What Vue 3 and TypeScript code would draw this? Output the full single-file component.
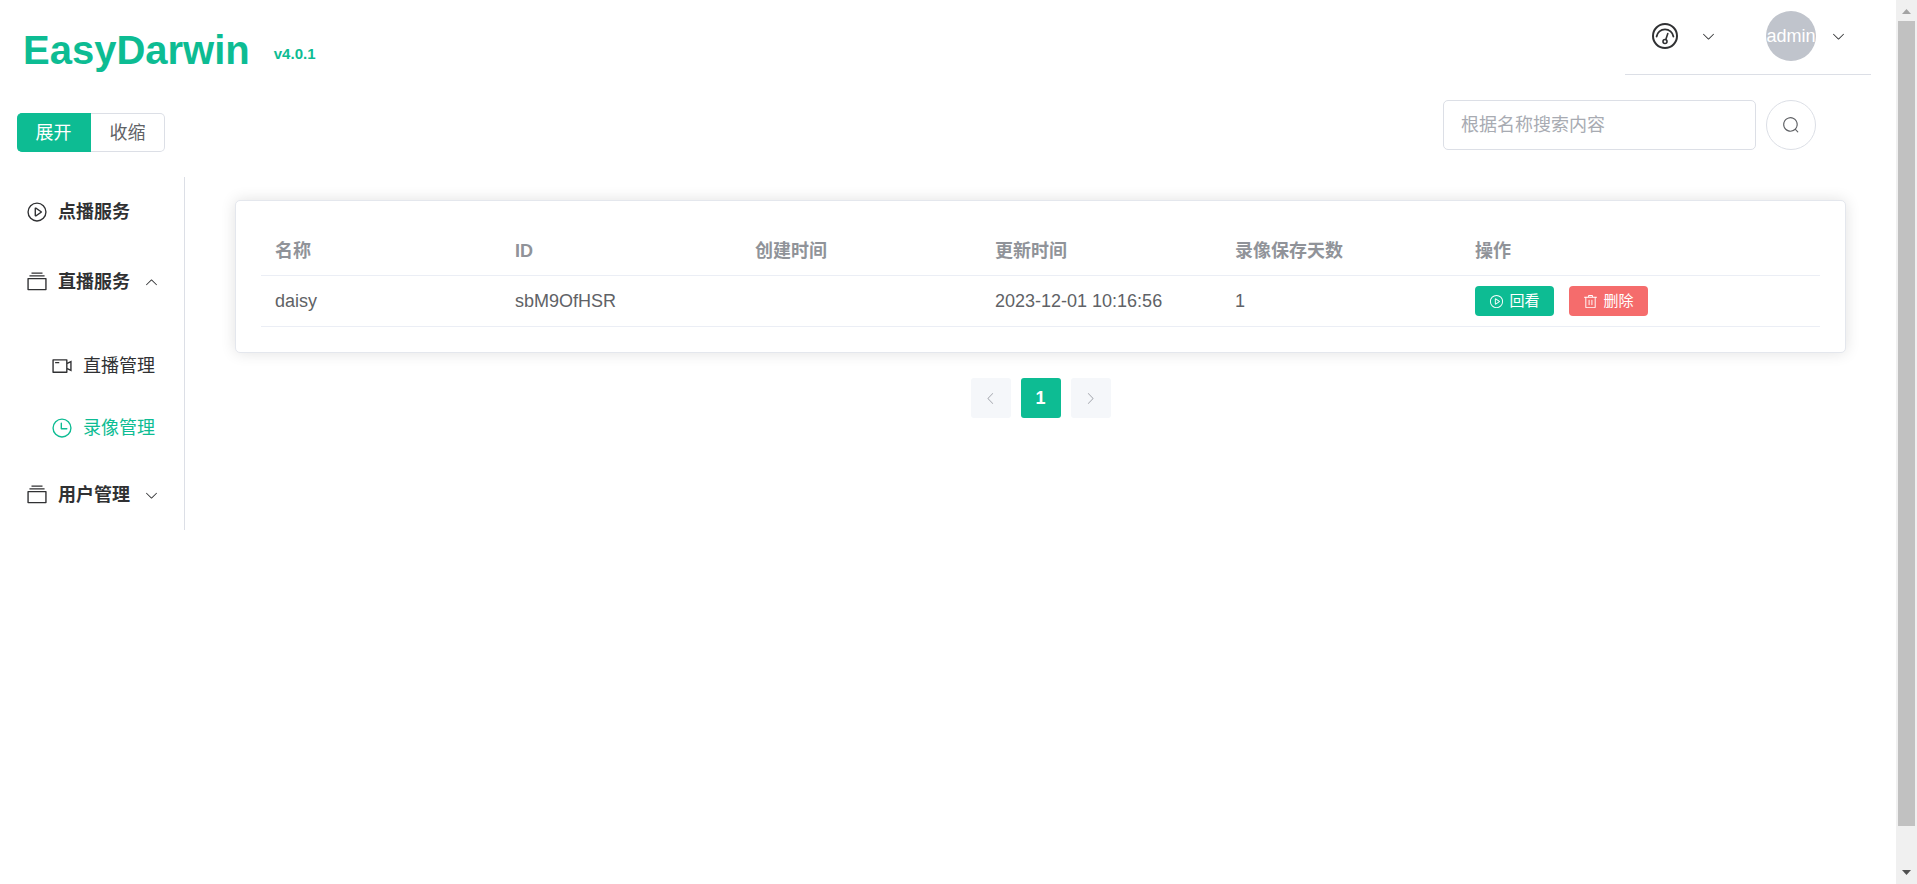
<script setup lang="ts">
import { ref } from 'vue'

const icons = {
  play: 'M512 64a448 448 0 1 1 0 896 448 448 0 0 1 0-896zm0 832a384 384 0 0 0 0-768 384 384 0 0 0 0 768zm-48-247.616L668.608 512 464 375.616v272.768zm10.624-342.656 249.472 166.336a48 48 0 0 1 0 79.872L474.624 718.272A48 48 0 0 1 400 678.336V345.6a48 48 0 0 1 74.624-39.936z',
  files: 'M128 384v448h768V384H128zm-32-64h832a32 32 0 0 1 32 32v512a32 32 0 0 1-32 32H96a32 32 0 0 1-32-32V352a32 32 0 0 1 32-32zm64-128h704v64H160zm96-128h512v64H256z',
  camera: 'M704 768V256H128v512h576zm64-416 192-96v512l-192-96v128a32 32 0 0 1-32 32H96a32 32 0 0 1-32-32V224a32 32 0 0 1 32-32h640a32 32 0 0 1 32 32v128zm0 71.552v176.896l128 64V359.552l-128 64zM192 320h192v64H192v-64z',
  clock: 'M512 896a384 384 0 1 0 0-768 384 384 0 0 0 0 768zm0 64a448 448 0 1 1 0-896 448 448 0 0 1 0 896zM480 256a32 32 0 0 1 32 32v224h224q32 0 32 32t-32 32H480q-32 0-32-32V288a32 32 0 0 1 32-32z',
  arrow: 'M831.872 340.864 512 652.672 192.128 340.864a30.592 30.592 0 0 0-42.752 0 29.12 29.12 0 0 0 0 41.6L489.664 714.24a32 32 0 0 0 44.672 0l340.288-331.712a29.12 29.12 0 0 0 0-41.728 30.592 30.592 0 0 0-42.752 0z',
  search: 'm795.904 750.72 124.992 124.928a32 32 0 0 1-45.248 45.248L750.656 795.904a416 416 0 1 1 45.248-45.248zM480 832a352 352 0 1 0 0-704 352 352 0 0 0 0 704z',
  trash: 'M160 256H96a32 32 0 0 1 0-64h256V95.936a32 32 0 0 1 32-32h256a32 32 0 0 1 32 32V192h256a32 32 0 0 1 0 64h-64v672a32 32 0 0 1-32 32H192a32 32 0 0 1-32-32V256zm448-64v-64H416v64h192zM224 896h576V256H224v640zm192-128a32 32 0 0 1-32-32V416a32 32 0 0 1 64 0v320a32 32 0 0 1-32 32zm192 0a32 32 0 0 1-32-32V416a32 32 0 0 1 64 0v320a32 32 0 0 1-32 32z',
}

interface Recording {
  name: string
  id: string
  created: string
  updated: string
  days: number
}

const columns = ['名称', 'ID', '创建时间', '更新时间', '录像保存天数', '操作']
const rows: Recording[] = [
  { name: 'daisy', id: 'sbM9OfHSR', created: '', updated: '2023-12-01 10:16:56', days: 1 },
]
const expanded = ref(true)
const liveOpen = ref(true)
const keyword = ref('')
</script>

<template>
  <div class="window">
    <div class="page">
      <header class="header">
        <div class="brand">
          <h1 class="title">EasyDarwin</h1>
          <span class="version">v4.0.1</span>
        </div>
        <div class="account">
          <button class="plain theme" type="button" aria-label="仪表盘">
            <svg class="gauge" viewBox="0 0 26 26" fill="none" stroke="currentColor" stroke-linecap="round">
              <circle cx="13" cy="13" r="12" stroke-width="2" />
              <path d="M4.600 13.500a8.500 8.500 0 0 1 16.800 0" stroke-width="1.800" />
              <circle cx="13" cy="18.500" r="2" stroke-width="1.600" />
              <path d="M13.800 16.500l2-6" stroke-width="1.600" />
            </svg>
            <svg class="chevron" viewBox="0 0 1024 1024"><path :d="icons.arrow" /></svg>
          </button>
          <button class="plain user" type="button">
            <span class="avatar">admin</span>
            <svg class="chevron" viewBox="0 0 1024 1024"><path :d="icons.arrow" /></svg>
          </button>
        </div>
      </header>

      <div class="toolbar">
        <div class="toggle">
          <button type="button" :class="{ on: expanded }" @click="expanded = true">展开</button>
          <button type="button" :class="{ on: !expanded }" @click="expanded = false">收缩</button>
        </div>
        <form class="search" @submit.prevent>
          <input v-model="keyword" type="text" placeholder="根据名称搜索内容" aria-label="根据名称搜索内容" />
          <button type="submit" aria-label="搜索">
            <svg class="icon-md" viewBox="0 0 1024 1024"><path :d="icons.search" /></svg>
          </button>
        </form>
      </div>

      <div class="body">
        <nav class="menu">
          <a class="item" href="#vod">
            <svg class="icon" viewBox="0 0 1024 1024"><path :d="icons.play" /></svg>
            <span>点播服务</span>
          </a>
          <button class="item" type="button" :aria-expanded="liveOpen" @click="liveOpen = !liveOpen">
            <svg class="icon" viewBox="0 0 1024 1024"><path :d="icons.files" /></svg>
            <span>直播服务</span>
            <svg class="chevron" :class="{ up: liveOpen }" viewBox="0 0 1024 1024"><path :d="icons.arrow" /></svg>
          </button>
          <div v-if="liveOpen" class="submenu">
            <a class="subitem" href="#live">
              <svg class="icon" viewBox="0 0 1024 1024"><path :d="icons.camera" /></svg>
              <span>直播管理</span>
            </a>
            <a class="subitem active" href="#record">
              <svg class="icon" viewBox="0 0 1024 1024"><path :d="icons.clock" /></svg>
              <span>录像管理</span>
            </a>
          </div>
          <button class="item" type="button" aria-expanded="false">
            <svg class="icon" viewBox="0 0 1024 1024"><path :d="icons.files" /></svg>
            <span>用户管理</span>
            <svg class="chevron" viewBox="0 0 1024 1024"><path :d="icons.arrow" /></svg>
          </button>
        </nav>

        <main class="main">
          <section class="card">
            <table>
              <colgroup>
                <col v-for="n in 5" :key="n" class="col" />
                <col />
              </colgroup>
              <thead>
                <tr>
                  <th v-for="c in columns" :key="c" scope="col">{{ c }}</th>
                </tr>
              </thead>
              <tbody>
                <tr v-for="r in rows" :key="r.id">
                  <td>{{ r.name }}</td>
                  <td>{{ r.id }}</td>
                  <td>{{ r.created }}</td>
                  <td>{{ r.updated }}</td>
                  <td>{{ r.days }}</td>
                  <td>
                    <div class="actions">
                      <button class="action" type="button">
                        <svg class="icon-sm" viewBox="0 0 1024 1024"><path :d="icons.play" /></svg>
                        <span>回看</span>
                      </button>
                      <button class="action danger" type="button">
                        <svg class="icon-sm" viewBox="0 0 1024 1024"><path :d="icons.trash" /></svg>
                        <span>删除</span>
                      </button>
                    </div>
                  </td>
                </tr>
              </tbody>
            </table>
          </section>
          <nav class="pager" aria-label="分页">
            <button type="button" disabled aria-label="上一页">
              <svg class="chevron left" viewBox="0 0 1024 1024"><path :d="icons.arrow" /></svg>
            </button>
            <button type="button" class="current" aria-current="page">1</button>
            <button type="button" disabled aria-label="下一页">
              <svg class="chevron right" viewBox="0 0 1024 1024"><path :d="icons.arrow" /></svg>
            </button>
          </nav>
        </main>
      </div>
    </div>

    <div class="scrollbar" aria-hidden="true">
      <svg class="arrow dim" viewBox="0 0 21 21"><path d="M6 14h9l-4.500-5z" /></svg>
      <div class="track"><div class="thumb"></div></div>
      <svg class="arrow" viewBox="0 0 21 21"><path d="M6 7h9l-4.500 5z" /></svg>
    </div>
  </div>
</template>

<style>
body {
  margin: 0;
}
</style>

<style scoped>
.window {
  display: flex;
  min-height: 100vh;
  background: #fff;
  color: #303133;
  font-family: "Liberation Sans", "Noto Sans CJK SC", sans-serif;
  font-size: 18px;
  line-height: 24px;
}
.window * {
  box-sizing: border-box;
}
button,
input {
  margin: 0;
  font: inherit;
}
button {
  cursor: pointer;
}
svg {
  display: block;
  flex: none;
  fill: currentColor;
}
.page {
  flex: 1;
  min-width: 0;
}

.header {
  display: flex;
  justify-content: space-between;
  align-items: flex-start;
  padding: 0 25px 0 23px;
}
.brand {
  display: flex;
  align-items: center;
  gap: 24px;
  height: 100px;
  color: #0dbc93;
  font-weight: bold;
}
.title {
  margin: 0;
  font-size: 40px;
  line-height: 48px;
}
.version {
  font-size: 15px;
  padding-top: 8px;
}
.account {
  display: flex;
  align-items: center;
  gap: 50px;
  height: 75px;
  padding: 0 25px 2px 27px;
  border-bottom: 1px solid #dcdfe6;
}
.plain {
  display: flex;
  align-items: center;
  padding: 0;
  border: 0;
  background: none;
  color: #303133;
}
.theme {
  gap: 23px;
}
.gauge {
  width: 26px;
  height: 26px;
  fill: none;
}
.chevron {
  width: 15px;
  height: 15px;
}
.user {
  gap: 15px;
}
.avatar {
  width: 50px;
  height: 50px;
  border-radius: 50%;
  background: #c0c4cc;
  color: #fff;
  line-height: 50px;
  text-align: center;
  white-space: nowrap;
}

.toolbar {
  display: flex;
  align-items: flex-start;
  justify-content: space-between;
  padding: 0 80px 0 17px;
}
.toggle {
  display: flex;
  padding-top: 13px;
}
.toggle button {
  width: 74px;
  height: 39px;
  padding: 0;
  border: 1px solid #dcdfe6;
  border-left: 0;
  border-radius: 0 5px 5px 0;
  background: #fff;
  color: #606266;
}
.toggle button:first-child {
  border-radius: 5px 0 0 5px;
}
.toggle .on {
  border-color: #0dbc93;
  background: #0dbc93;
  color: #fff;
}
.search {
  display: flex;
  gap: 10px;
}
.search input {
  width: 313px;
  height: 50px;
  padding: 0 17px;
  border: 1px solid #dcdfe6;
  border-radius: 5px;
  outline: none;
  color: #606266;
}
.search input::placeholder {
  color: #a8abb2;
}
.search button {
  display: flex;
  align-items: center;
  justify-content: center;
  width: 50px;
  height: 50px;
  padding: 0;
  border: 1px solid #dcdfe6;
  border-radius: 50%;
  background: #fff;
  color: #606266;
}
.icon-md {
  width: 18px;
  height: 18px;
}

.body {
  display: flex;
  align-items: flex-start;
  padding-top: 25px;
}
.menu {
  display: flex;
  flex: none;
  flex-direction: column;
  width: 185px;
  border-right: 1px solid #dcdfe6;
}
.item,
.subitem {
  display: flex;
  align-items: center;
  gap: 10px;
  color: #303133;
  text-decoration: none;
}
.item {
  height: 70px;
  padding: 0 0 0 26px;
  border: 0;
  background: none;
  font-weight: bold;
}
.item .chevron {
  margin-left: 4px;
}
.up {
  transform: rotate(180deg);
}
.submenu {
  padding: 18px 0 1px;
}
.subitem {
  height: 62px;
  padding-left: 51px;
}
.active {
  color: #0dbc93;
}
.icon {
  width: 22px;
  height: 22px;
}

.main {
  flex: 1;
  min-width: 0;
  padding: 23px 50px 0;
}
.card {
  padding: 25px;
  border: 1px solid #e4e7ed;
  border-radius: 5px;
  background: #fff;
  box-shadow: 0 0 15px rgba(0, 0, 0, 0.12);
}
table {
  width: 100%;
  border-collapse: separate;
  border-spacing: 0;
  table-layout: fixed;
  color: #606266;
}
.col {
  width: 240px;
}
th,
td {
  height: 51px;
  padding: 0 14px;
  border-bottom: 1px solid #ebeef5;
  text-align: left;
}
th {
  height: 50px;
  color: #909399;
}
.actions {
  display: flex;
  gap: 15px;
}
.action {
  display: flex;
  align-items: center;
  justify-content: center;
  gap: 5px;
  width: 79px;
  height: 30px;
  padding: 0;
  border: 0;
  border-radius: 4px;
  background: #0dbc93;
  color: #fff;
  font-size: 15px;
}
.danger {
  background: #f56c6c;
}
.icon-sm {
  width: 15px;
  height: 15px;
}

.pager {
  display: flex;
  justify-content: center;
  gap: 10px;
  padding-top: 25px;
}
.pager button {
  display: flex;
  align-items: center;
  justify-content: center;
  width: 40px;
  height: 40px;
  padding: 0;
  border: 0;
  border-radius: 3px;
  background: #f5f7fa;
  color: #a8abb2;
  font-weight: bold;
}
.pager .current {
  background: #0dbc93;
  color: #fff;
}
.left {
  transform: rotate(90deg);
}
.right {
  transform: rotate(-90deg);
}

.scrollbar {
  display: flex;
  flex: none;
  flex-direction: column;
  width: 21px;
  background: #f0f0f0;
}
.arrow {
  width: 21px;
  height: 21px;
  color: #505050;
}
.dim {
  color: #a3a3a3;
}
.track {
  flex: 1;
  display: grid;
  grid-template-rows: 805fr 37fr;
  padding: 0 2px;
}
.thumb {
  background: #c1c1c1;
}
</style>
